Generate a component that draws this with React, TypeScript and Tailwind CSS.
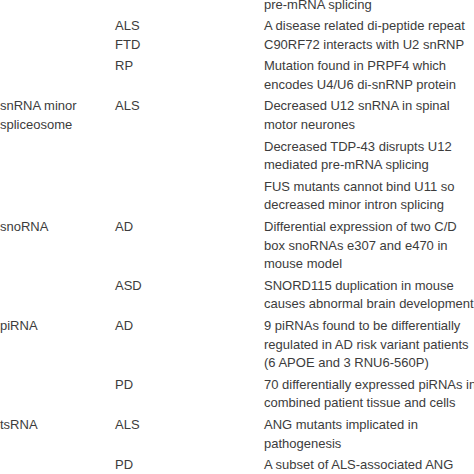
const rows: { a?: string[]; b?: string[]; c: string[] }[] = [
  { c: ["pre-mRNA splicing"] },
  { b: ["ALS", "FTD"], c: ["A disease related di-peptide repeat", "C90RF72 interacts with U2 snRNP"] },
  { b: ["RP"], c: ["Mutation found in PRPF4 which", "encodes U4/U6 di-snRNP protein"] },
  { a: ["snRNA minor", "spliceosome"], b: ["ALS"], c: ["Decreased U12 snRNA in spinal", "motor neurones"] },
  { c: ["Decreased TDP-43 disrupts U12", "mediated pre-mRNA splicing"] },
  { c: ["FUS mutants cannot bind U11 so", "decreased minor intron splicing"] },
  { a: ["snoRNA"], b: ["AD"], c: ["Differential expression of two C/D", "box snoRNAs e307 and e470 in", "mouse model"] },
  { b: ["ASD"], c: ["SNORD115 duplication in mouse", "causes abnormal brain development"] },
  { a: ["piRNA"], b: ["AD"], c: ["9 piRNAs found to be differentially", "regulated in AD risk variant patients", "(6 APOE and 3 RNU6-560P)"] },
  { b: ["PD"], c: ["70 differentially expressed piRNAs in", "combined patient tissue and cells"] },
  { a: ["tsRNA"], b: ["ALS"], c: ["ANG mutants implicated in", "pathogenesis"] },
  { b: ["PD"], c: ["A subset of ALS-associated ANG"] },
];

function Cell({ lines }: { lines?: string[] }) {
  return (
    <div className="py-[1.5px] whitespace-nowrap">
      {(lines ?? []).map((l, i) => (
        <div key={i}>{l}</div>
      ))}
    </div>
  );
}

export default function App() {
  return (
    <div className="w-[474px] h-[474px] overflow-hidden bg-white">
      <div
        className="-mt-[6px] grid grid-cols-[115px_149px_1fr] text-[13px] leading-[18.6px] text-[#3c3c3c]"
        style={{ fontFamily: '"Liberation Sans", Arial, sans-serif' }}
      >
        {rows.map((r, i) => (
          <div key={i} className="contents">
            <Cell lines={r.a} />
            <Cell lines={r.b} />
            <Cell lines={r.c} />
          </div>
        ))}
      </div>
    </div>
  );
}
